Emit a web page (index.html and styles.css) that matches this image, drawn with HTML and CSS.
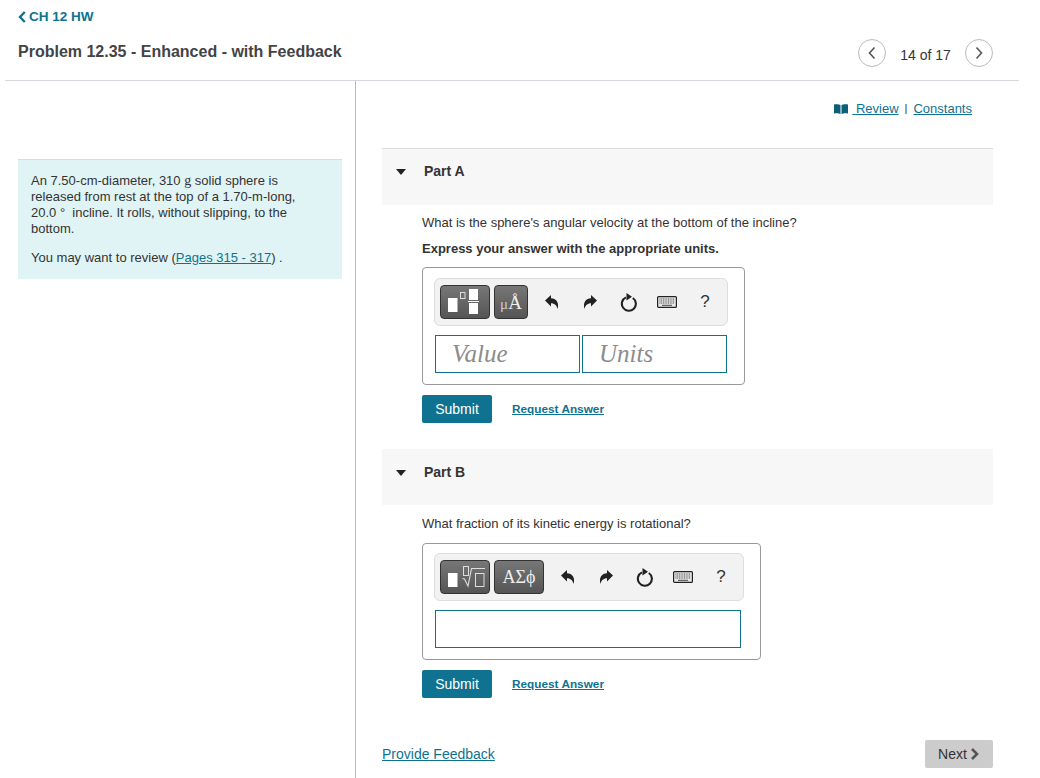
FILE: index.html
```html
<!DOCTYPE html>
<html lang="en">
<head>
<meta charset="utf-8">
<title>Problem 12.35</title>
<link rel="stylesheet" href="styles.css">
</head>
<body>
<div class="page">
  <header class="top">
    <div class="top-left">
      <a class="back" href="#"><svg class="back-ico" width="8" height="12" viewBox="0 0 8 12"><path d="M6.800 1 2 6l4.800 5" fill="none" stroke="#0f7290" stroke-width="2.400"/></svg>CH 12 HW</a>
      <h1 class="title">Problem 12.35 - Enhanced - with Feedback</h1>
    </div>
    <nav class="pager">
      <span class="circle"><svg width="10" height="14" viewBox="0 0 10 14"><path d="M7.500 1.500 2.500 7l5 5.500" fill="none" stroke="#555" stroke-width="1.600"/></svg></span>
      <span class="count">14 of 17</span>
      <span class="circle"><svg width="10" height="14" viewBox="0 0 10 14"><path d="M2.500 1.500l5 5.500-5 5.500" fill="none" stroke="#555" stroke-width="1.600"/></svg></span>
    </nav>
  </header>
  <div class="main">
    <aside class="left">
      <div class="intro">
        <p class="intro-p">An 7.50-cm-diameter, 310 <span class="serif">g</span> solid sphere is released from rest at the top of a 1.70-m-long, 20.0 °&nbsp; incline. It rolls, without slipping, to the bottom.</p>
        <p class="intro-p2">You may want to review (<a href="#">Pages 315 - 317</a>) .</p>
      </div>
    </aside>
    <section class="right">
      <div class="links">
        <a href="#"><svg class="book" width="14" height="10" viewBox="0 0 14 10"><path d="M0 .5C2 0 5 0 6.500 1v9C5 9 2 9 0 9.500zM14 .5C12 0 9 0 7.500 1v9C9 9 12 9 14 9.500z" fill="#0b5f78"/></svg> Review</a><span class="sep">|</span><a href="#">Constants</a>
      </div>

      <div class="part-head"><span class="tri"></span><span class="part-name">Part A</span></div>
      <div class="part-body">
        <p class="q">What is the sphere's angular velocity at the bottom of the incline?</p>
        <p class="q-b">Express your answer with the appropriate units.</p>
        <div class="box box-a">
          <div class="bar">
            <span class="tb tb-frac">
              <svg width="50" height="34" viewBox="0 0 50 34">
                <rect x="8" y="13" width="9.500" height="14" fill="#fff"/>
                <rect x="20.500" y="7.500" width="4.500" height="6" fill="none" stroke="#ddd"/>
                <rect x="29" y="4" width="9" height="11" fill="#fff"/>
                <rect x="28" y="16" width="11" height="1" fill="#fff"/>
                <rect x="29" y="18" width="9" height="11" fill="#fff"/>
              </svg>
            </span>
            <span class="tb tb-mu"><span class="mu">μ</span><span class="ang">Å</span></span>
            <span class="tools">
              <svg width="16" height="16" viewBox="0 0 16 16"><use href="#undo"/></svg>
              <svg width="16" height="16" viewBox="0 0 16 16"><use href="#redo"/></svg>
              <svg width="18" height="20" viewBox="0 0 18 20"><use href="#reset"/></svg>
              <svg width="20" height="12" viewBox="0 0 20 12"><use href="#keys"/></svg>
              <span class="help">?</span>
            </span>
          </div>
          <div class="inputs">
            <div class="field field-a">Value</div>
            <div class="field field-a">Units</div>
          </div>
        </div>
        <div class="actions"><button class="submit">Submit</button><a class="req" href="#">Request Answer</a></div>
      </div>

      <div class="part-head head-b"><span class="tri"></span><span class="part-name">Part B</span></div>
      <div class="part-body">
        <p class="q q-second">What fraction of its kinetic energy is rotational?</p>
        <div class="box box-b">
          <div class="bar">
            <span class="tb tb-frac">
              <svg width="50" height="34" viewBox="0 0 50 34">
                <rect x="8" y="13" width="9.500" height="14" fill="#fff"/>
                <rect x="23.500" y="6.500" width="5" height="9" fill="none" stroke="#ddd"/>
                <path d="M22.500 18.500l2 .5 3.500 7L31.500 8.500H45" fill="none" stroke="#ddd" stroke-width="1.100"/>
                <rect x="35.500" y="13.500" width="8.500" height="13" fill="none" stroke="#ddd"/>
              </svg>
            </span>
            <span class="tb tb-greek">ΑΣϕ</span>
            <span class="tools">
              <svg width="16" height="16" viewBox="0 0 16 16"><use href="#undo"/></svg>
              <svg width="16" height="16" viewBox="0 0 16 16"><use href="#redo"/></svg>
              <svg width="18" height="20" viewBox="0 0 18 20"><use href="#reset"/></svg>
              <svg width="20" height="12" viewBox="0 0 20 12"><use href="#keys"/></svg>
              <span class="help">?</span>
            </span>
          </div>
          <div class="field field-b"></div>
        </div>
        <div class="actions"><button class="submit">Submit</button><a class="req" href="#">Request Answer</a></div>
      </div>

      <div class="foot">
        <a class="feedback" href="#">Provide Feedback</a>
        <button class="next">Next <svg width="10" height="12" viewBox="0 0 10 12"><path d="M2 1l5 5-5 5" fill="none" stroke="#555" stroke-width="2.600"/></svg></button>
      </div>
    </section>
  </div>
</div>
<svg class="defs" width="0" height="0">
  <defs>
    <path id="undo" d="M1 6.500 7 1v3.200C12 4.200 15.500 8.500 13.500 15 12.800 11.500 10.500 9.300 7 9.300V12.500z" fill="#222"/>
    <path id="redo" d="M15 6.500 9 1v3.200C4 4.200.5 8.500 2.500 15 3.200 11.500 5.500 9.300 9 9.300V12.500z" fill="#222"/>
    <g id="reset">
      <path d="M6 5.400A7 7 0 1 0 12.800 6" fill="none" stroke="#222" stroke-width="2.100"/>
      <path d="M6.500 1 12 4.800 6.500 8.500z" fill="#222"/>
    </g>
    <g id="keys">
      <rect x=".6" y=".6" width="18.800" height="10.800" rx="1" fill="#e8e8e8" stroke="#222" stroke-width="1.200"/>
      <path d="M2.500 3h15M2.500 5h15M2.500 7h15" stroke="#444" stroke-dasharray="1 .7"/>
      <path d="M5 9.300h10" stroke="#444"/>
    </g>
  </defs>
</svg>
</body>
</html>
```
FILE: styles.css
```css
* { box-sizing: border-box; }
html, body { margin: 0; padding: 0; height: 778px; overflow: hidden; background: #fff; }
body { font-family: "Liberation Sans", Arial, sans-serif; color: #333; font-size: 13px; }
a { color: #0f7290; }
p { margin: 0; }
.defs { position: absolute; }

.page { width: 1014px; margin-left: 5px; height: 778px; display: flex; flex-direction: column; }
.top { height: 81px; border-bottom: 1px solid #d4d8dc; display: flex; justify-content: space-between; padding: 0 26px 0 13px; flex: none; }
.back { display: flex; align-items: center; gap: 3px; margin-top: 10px; height: 14px; font-size: 13.500px; font-weight: bold; text-decoration: none; line-height: 14px; }
.back-ico { flex: none; }
.title { margin: 17px 0 0; font-size: 16px; line-height: 22px; font-weight: bold; color: #444; }
.pager { display: flex; align-items: center; height: 28px; margin-top: 39px; }
.circle { width: 28px; height: 28px; border: 1px solid #bbb; border-radius: 50%; display: flex; align-items: center; justify-content: center; }
.count { width: 79px; text-align: center; font-size: 14px; color: #333; padding-top: 3px; }

.main { flex: 1; display: flex; min-height: 0; }
.left { width: 351px; flex: none; border-right: 1px solid #b4bcc6; padding: 78px 13px 0 13px; }
.intro { background: #e1f4f5; border-top: 1px solid #d4dde0; height: 120px; padding: 13px 13px 0; font-size: 13px; line-height: 16px; color: #333; }
.intro-p { width: 280px; }
.intro-p2 { margin-top: 13px; }
.serif { font-family: "Liberation Serif", serif; font-size: 14px; }

.right { flex: 1; padding: 0 26px 0 26px; min-width: 0; }
.links { display: flex; justify-content: flex-end; align-items: center; height: 55px; padding-right: 21px; font-size: 13px; line-height: 55px; }
.book { vertical-align: -1px; margin-right: 4px; }
.sep { margin: 0 6px; color: #333; font-size: 11px; }
.part-head { margin-top: 12px; height: 57px; background: #f7f7f7; border-top: 1px solid #ddd; display: flex; align-items: flex-start; padding: 14px 0 0 14px; }
.head-b { margin-top: 26px; border-top: 0; padding-top: 15px; height: 56px; }
.tri { width: 0; height: 0; border-left: 5.500px solid transparent; border-right: 5.500px solid transparent; border-top: 6px solid #222; margin-top: 6px; flex: none; }
.part-name { margin-left: 18px; font-size: 14px; line-height: 16px; font-weight: bold; color: #333; }
.part-body { padding-left: 40px; }
.q { font-size: 13px; line-height: 16px; margin-top: 10px; }
.q-second { margin-top: 11px; }
.q-b { font-size: 13px; line-height: 16px; margin-top: 10px; font-weight: bold; }
.box { border: 1px solid #999; border-radius: 4px; padding: 10px 11px 0 11px; }
.box-a { width: 323px; height: 118px; margin-top: 10px; }
.box-b { width: 339px; height: 117px; margin-top: 11px; padding-top: 9px; }
.bar { height: 48px; background: #f2f2f2; border: 1px solid #ddd; border-radius: 6px; display: flex; align-items: center; padding-left: 5px; gap: 4px; }
.box-a .bar { width: 294px; }
.box-b .bar { width: 310px; }
.tb { height: 34px; border-radius: 4px; border: 1px solid #333; background: linear-gradient(#777, #555); display: flex; align-items: center; justify-content: center; color: #eee; font-family: "Liberation Serif", serif; flex: none; }
.tb-frac { width: 50px; }
.tb-frac svg { margin: -1px; flex: none; }
.tb-mu { width: 34px; }
.mu { font-size: 15px; color: #ccc; margin-top: 4px; }
.ang { font-size: 19px; margin-top: 2px; }
.tb-greek { width: 50px; font-size: 18px; }
.tools { display: flex; align-items: center; flex: 1; padding-left: 12px; }
.tools > :nth-child(2), .tools > :nth-child(3) { margin-left: 22px; }
.tools > :nth-child(4) { margin-left: 19px; }
.tools > :nth-child(5) { margin-left: 21px; }
.help { font-size: 17px; color: #333; width: 14px; text-align: center; }
.inputs { display: flex; gap: 2px; margin: 9px 0 0 1px; }
.field { height: 38px; border: 1px solid #0f7290; background: #fff; }
.field-a { width: 145px; padding-left: 16px; font-family: "Liberation Serif", serif; font-style: italic; font-size: 25px; line-height: 36px; color: #8c8c8c; }
.field-b { width: 306px; margin: 9px 0 0 1px; }
.actions { display: flex; align-items: center; margin-top: 10px; gap: 20px; }
.submit { width: 70px; height: 28px; background: #0f7290; color: #fff; border: 0; border-radius: 2px; font-family: inherit; font-size: 14px; font-weight: normal; padding: 0; }
.req { font-size: 11.800px; font-weight: bold; }
.foot { display: flex; justify-content: space-between; align-items: center; margin-top: 42px; height: 28px; }
.feedback { font-size: 14px; }
.next { width: 68px; height: 28px; background: #ccc; border: 0; border-radius: 2px; color: #333; font-family: inherit; font-size: 14px; padding: 0; display: flex; align-items: center; justify-content: center; gap: 3px; }
```
